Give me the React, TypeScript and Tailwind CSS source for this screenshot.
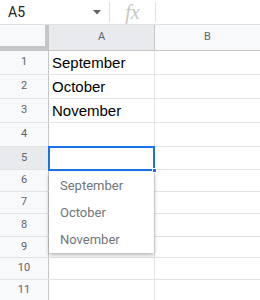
import React from "react";

const rows: { n: number; h: number; v?: string }[] = [
  { n: 1, h: 24, v: "September" },
  { n: 2, h: 24, v: "October" },
  { n: 3, h: 24, v: "November" },
  { n: 4, h: 24 },
  { n: 5, h: 23 },
  { n: 6, h: 22 },
  { n: 7, h: 22 },
  { n: 8, h: 23 },
  { n: 9, h: 21 },
  { n: 10, h: 22 },
  { n: 11, h: 22 },
];

export default function App() {
  return (
    <div
      className="relative w-[260px] h-[300px] overflow-hidden bg-white"
      style={{ fontFamily: "Roboto, 'Liberation Sans', sans-serif" }}
    >
      {/* top bar */}
      <div className="flex items-center h-[25px] border-b border-[#e0e0e0]">
        <div className="w-[109px] flex items-center pl-[8px] pr-[8px] h-full">
          <span className="text-[14px] text-[#202124] leading-none">A5</span>
          <span className="ml-auto">
            <svg width="8" height="5" viewBox="0 0 8 5">
              <path d="M0 0 L8 0 L4 4.5 Z" fill="#5f6368" />
            </svg>
          </span>
        </div>
        <div className="w-px h-[20px] bg-[#e0e0e0]" />
        <div className="w-[45px] flex items-center justify-center h-full">
          <span
            className="italic text-[20px] text-[#c4c7c5] leading-none"
            style={{ fontFamily: "'Liberation Serif', serif" }}
          >
            fx
          </span>
        </div>
        <div className="w-px h-[20px] bg-[#e0e0e0]" />
      </div>

      {/* column headers */}
      <div className="flex h-[26px] border-b border-[#c4c7c5]">
        <div className="w-[49px] h-full bg-[#f8f9fa] border-r-[4px] border-b-[4px] border-[#c4c7c5] box-border" />
        <div className="w-[106px] h-full bg-[#e8eaed] border-r border-[#c4c7c5] flex items-center justify-center text-[11px] text-[#5f6368]">
          A
        </div>
        <div className="flex-1 h-full bg-[#f8f9fa] flex items-center justify-center text-[11px] text-[#5f6368]">
          B
        </div>
      </div>

      {/* rows */}
      {rows.map((r) => (
        <div
          key={r.n}
          className="flex border-b border-[#e2e3e3]"
          style={{ height: r.h }}
        >
          <div
            className={
              "w-[49px] h-full border-r border-[#c4c7c5] flex items-center justify-center text-[11px] text-[#5f6368] " +
              (r.n === 5 ? "bg-[#e8eaed]" : "bg-[#f8f9fa]")
            }
          >
            {r.n}
          </div>
          <div
            className="w-[106px] h-full border-r border-[#e2e3e3] flex items-center pl-[3px] pt-[2px] text-[15px] text-[#000000]"
            style={{ fontFamily: "'Liberation Sans', Arial, sans-serif" }}
          >
            {r.v}
          </div>
          <div className="flex-1 h-full" />
        </div>
      ))}

      {/* selected cell */}
      <div className="absolute left-[48px] top-[146px] w-[107px] h-[25px] border-2 border-[#1a73e8]" />
      <div className="absolute left-[152px] top-[168px] w-[5px] h-[5px] bg-[#1a73e8] border border-white" />

      {/* dropdown */}
      <div className="absolute left-[49px] top-[172px] w-[105px] h-[81px] bg-white shadow-[0_2px_4px_rgba(0,0,0,0.3)] flex flex-col">
        {["September", "October", "November"].map((m) => (
          <div
            key={m}
            className="h-[27px] flex items-center pl-[11px] text-[13px] text-[#70757a]"
          >
            {m}
          </div>
        ))}
      </div>
    </div>
  );
}
